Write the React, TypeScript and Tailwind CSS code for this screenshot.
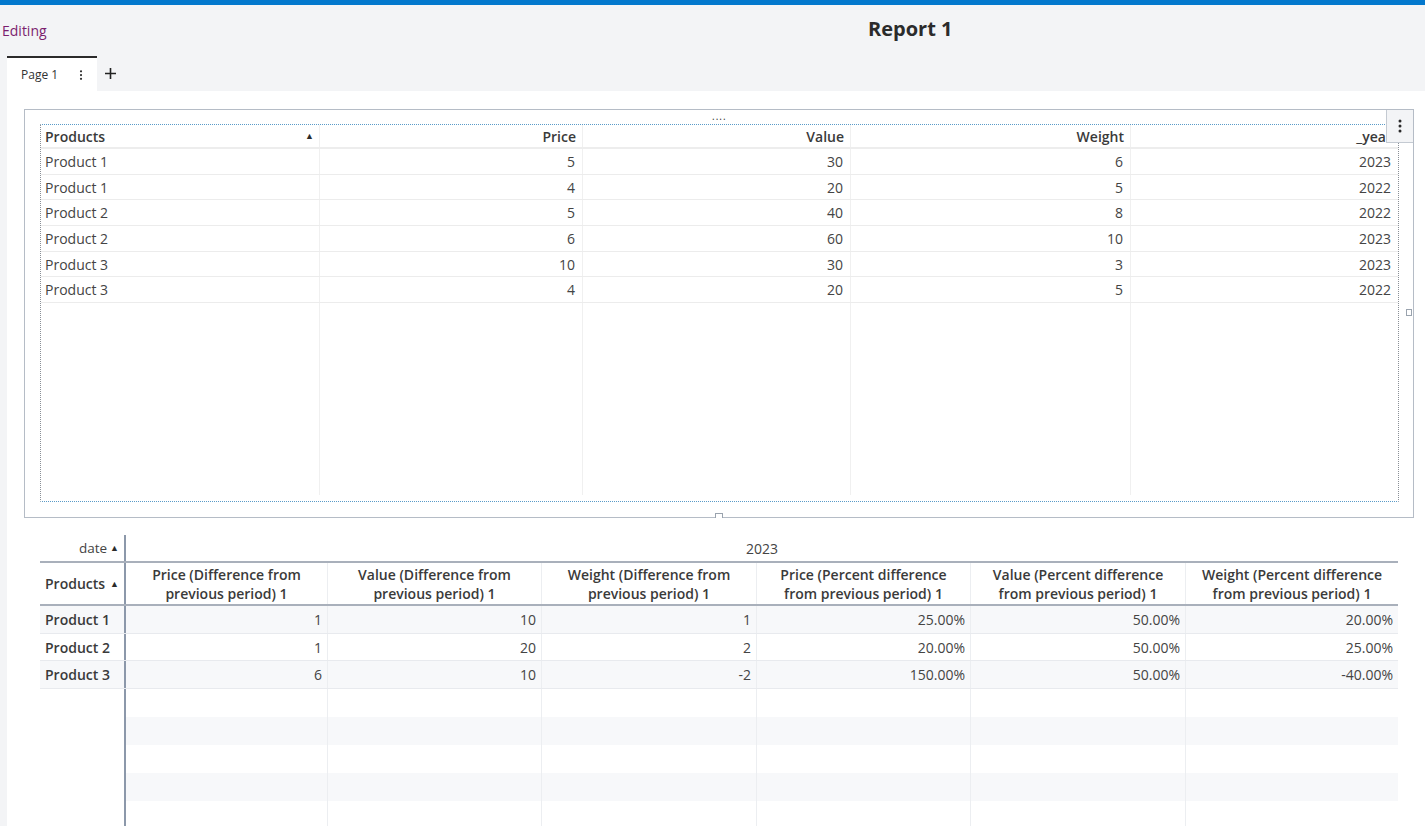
import React from 'react';

const topCols = [
  { label: 'Products', w: 'w-[279px]', align: 'left' },
  { label: 'Price', w: 'w-[263px]', align: 'right' },
  { label: 'Value', w: 'w-[268px]', align: 'right' },
  { label: 'Weight', w: 'w-[280px]', align: 'right' },
  { label: '_year', w: 'w-[267px]', align: 'right' },
];

const topRows = [
  ['Product 1', '5', '30', '6', '2023'],
  ['Product 1', '4', '20', '5', '2022'],
  ['Product 2', '5', '40', '8', '2022'],
  ['Product 2', '6', '60', '10', '2023'],
  ['Product 3', '10', '30', '3', '2023'],
  ['Product 3', '4', '20', '5', '2022'],
];

const ctCols = [
  { label: ['Price (Difference from', 'previous period) 1'], w: 'w-[202px]' },
  { label: ['Value (Difference from', 'previous period) 1'], w: 'w-[214px]' },
  { label: ['Weight (Difference from', 'previous period) 1'], w: 'w-[215px]' },
  { label: ['Price (Percent difference', 'from previous period) 1'], w: 'w-[214px]' },
  { label: ['Value (Percent difference', 'from previous period) 1'], w: 'w-[215px]' },
  { label: ['Weight (Percent difference', 'from previous period) 1'], w: 'w-[212px]' },
];

const ctRows = [
  ['Product 1', '1', '10', '1', '25.00%', '50.00%', '20.00%'],
  ['Product 2', '1', '20', '2', '20.00%', '50.00%', '25.00%'],
  ['Product 3', '6', '10', '-2', '150.00%', '50.00%', '-40.00%'],
];

function Kebab({ className = '' }: { className?: string }) {
  return (
    <svg width="4" height="14" viewBox="0 0 4 14" className={className}>
      <circle cx="2" cy="2" r="1.5" fill="currentColor" />
      <circle cx="2" cy="7" r="1.5" fill="currentColor" />
      <circle cx="2" cy="12" r="1.5" fill="currentColor" />
    </svg>
  );
}

function TopTable() {
  return (
    <div className="flex flex-col h-full">
      <div className="flex h-[24px] border-b-2 border-[#ededed]">
        {topCols.map((c, i) => (
          <div
            key={c.label}
            className={`${c.w} flex items-center font-semibold text-[14px] text-[#3a3a3a] ${
              i < topCols.length - 1 ? 'border-r border-[#f0f0f0]' : ''
            } ${c.align === 'left' ? 'pl-[4px] pr-[5px] justify-between' : 'justify-end pr-[6px]'}`}
          >
            <span>{c.label}</span>
            {i === 0 && <span className="text-[9px] text-[#2b2b2b]">▲</span>}
          </div>
        ))}
      </div>
      {topRows.map((r, ri) => (
        <div key={ri} className="flex h-[25.7px] border-b border-[#ececec]">
          {r.map((v, i) => (
            <div
              key={i}
              className={`${topCols[i].w} flex items-center text-[14px] text-[#444] ${
                i < r.length - 1 ? 'border-r border-[#f0f0f0]' : ''
              } ${i === 0 ? 'pl-[4px]' : 'justify-end pr-[7px]'}`}
            >
              {v}
            </div>
          ))}
        </div>
      ))}
      <div className="flex flex-1 pb-[6px]">
        {topCols.map((c, i) => (
          <div
            key={c.label}
            className={`${c.w} ${i < topCols.length - 1 ? 'border-r border-[#f0f0f0]' : ''}`}
          />
        ))}
      </div>
    </div>
  );
}

function CrossTab() {
  const empty = [0, 1, 2, 3, 4];
  return (
    <div className="flex flex-col w-[1358px] ml-[33px] mt-[17px] text-[#3a3a3a]">
      <div className="flex h-[26px]">
        <div className="w-[86px] flex items-center justify-end pr-[5px] border-r-2 border-[#8c98aa] text-[13.5px] text-[#444]">
          date <span className="text-[9px] ml-[3px] text-[#2b2b2b]">▲</span>
        </div>
        <div className="flex-1 flex items-center justify-center text-[14px] text-[#444]">2023</div>
      </div>
      <div className="flex h-[45px] border-t-2 border-b-2 border-[#a9b0bb]">
        <div className="w-[86px] flex items-center pl-[5px] border-r-2 border-[#8c98aa] font-semibold text-[14px]">
          Products <span className="text-[9px] ml-[5px] text-[#2b2b2b]">▲</span>
        </div>
        {ctCols.map((c, i) => (
          <div
            key={i}
            className={`${c.w} flex flex-col items-center justify-center font-semibold text-[14px] leading-[19px] ${
              i < ctCols.length - 1 ? 'border-r border-[#eceef1]' : ''
            }`}
          >
            <span>{c.label[0]}</span>
            <span>{c.label[1]}</span>
          </div>
        ))}
      </div>
      {ctRows.map((r, ri) => (
        <div
          key={ri}
          className={`flex h-[27.7px] border-b border-[#e8eaee] ${ri % 2 === 0 ? 'bg-[#f7f8fa]' : 'bg-white'}`}
        >
          <div className="w-[86px] flex items-center pl-[5px] border-r-2 border-[#8c98aa] font-semibold text-[14px]">
            {r[0]}
          </div>
          {r.slice(1).map((v, i) => (
            <div
              key={i}
              className={`${ctCols[i].w} flex items-center justify-end pr-[5px] text-[14px] text-[#444] ${
                i < ctCols.length - 1 ? 'border-r border-[#eceef1]' : ''
              }`}
            >
              {v}
            </div>
          ))}
        </div>
      ))}
      {empty.map((e) => (
        <div key={e} className="flex h-[28px]">
          <div className="w-[86px] border-r-2 border-[#8c98aa] bg-white" />
          {ctCols.map((c, i) => (
            <div
              key={i}
              className={`${c.w} ${e % 2 === 1 ? 'bg-[#f7f8fa]' : 'bg-white'} ${
                i < ctCols.length - 1 ? 'border-r border-[#eceef1]' : ''
              }`}
            />
          ))}
        </div>
      ))}
    </div>
  );
}

export default function App() {
  return (
    <div className="w-[1425px] h-[826px] overflow-hidden bg-[#f3f4f6] flex flex-col font-['Open_Sans','Noto_Sans',sans-serif]">
      <div className="h-[5px] bg-[#0378cd] shrink-0" />
      <div className="h-[51px] flex items-center shrink-0">
        <div className="w-[868px] pl-[2px] text-[14px] text-[#7b1e6e] -mt-[1px]">Editing</div>
        <div className="text-[20px] font-bold text-[#2b2b2b] -mt-[4px]">Report 1</div>
      </div>
      <div className="h-[35px] flex items-stretch pl-[7px] shrink-0">
        <div className="w-[90px] bg-white border-t-2 border-[#2b2b2b] flex items-center pl-[14px] text-[12px] text-[#333]">
          <span>Page 1</span>
          <Kebab className="ml-[21px] text-[#333] scale-75" />
        </div>
        <div className="flex items-center pl-[8px] text-[#222]">
          <svg width="11" height="11" viewBox="0 0 11 11">
            <path d="M5.5 0v11M0 5.5h11" stroke="currentColor" strokeWidth="1.6" />
          </svg>
        </div>
      </div>
      <div className="flex-1 bg-white ml-[7px] flex flex-col">
        <div className="relative mt-[18px] ml-[17px] w-[1390px] h-[409px] border border-[#b5bcc6] shrink-0">
          <div className="absolute top-[3px] left-[687px] text-[10px] leading-[6px] text-[#333] tracking-[1px]">....</div>
          <div className="absolute top-0 right-0 w-[27px] h-[33px] bg-[#f3f4f6] border-l border-b border-[#c4cad2] flex items-center justify-center text-[#2b2b2b] z-10">
            <Kebab />
          </div>
          <div className="absolute right-[1px] top-[199px] w-[6px] h-[7px] border border-[#9aa3ae] bg-white" />
          <div className="absolute bottom-[-1px] left-[690px] w-[8px] h-[5px] border border-b-0 border-[#9aa3ae] bg-white" />
          <div className="ml-[15px] mt-[14px] w-[1359px] h-[378px] border-t border-b border-dotted border-t-[#5a9bc8] border-b-[#5a9bc8] border-l border-r border-l-[#8a8f96] border-r-[#8a8f96]">
            <TopTable />
          </div>
        </div>
        <CrossTab />
      </div>
    </div>
  );
}
